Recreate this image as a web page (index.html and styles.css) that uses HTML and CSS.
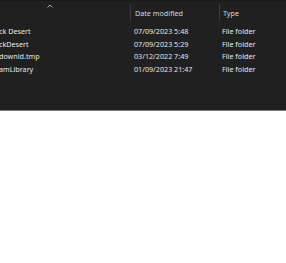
FILE: index.html
```html
<!DOCTYPE html>
<html>
<head>
<meta charset="utf-8">
<link rel="stylesheet" href="styles.css">
</head>
<body>
<div class="panel">
  <div class="header">
    <div class="col name hcell">
      <svg class="caret" width="6" height="4" viewBox="0 0 6 4"><path d="M0.5 3.5 L3 1 L5.5 3.5" fill="none" stroke="#a8a8a8" stroke-width="1"/></svg>
    </div>
    <div class="sep"></div>
    <div class="col date hcell">Date modified</div>
    <div class="sep"></div>
    <div class="col type hcell">Type</div>
  </div>
  <div class="rows">
    <div class="row"><div class="col name"><span class="clip">ck Desert</span></div><div class="col date">07/09/2023 5:48</div><div class="col type">File folder</div></div>
    <div class="row"><div class="col name"><span class="clip">ckDesert</span></div><div class="col date">07/09/2023 5:29</div><div class="col type">File folder</div></div>
    <div class="row"><div class="col name"><span class="clip">downld.tmp</span></div><div class="col date">03/12/2022 7:49</div><div class="col type">File folder</div></div>
    <div class="row"><div class="col name"><span class="clip">amLibrary</span></div><div class="col date">01/09/2023 21:47</div><div class="col type">File folder</div></div>
  </div>
</div>
</body>
</html>
```
FILE: styles.css
```css
html, body {
  margin: 0;
  padding: 0;
  background: #ffffff;
}
body {
  font-family: "Noto Sans", "Open Sans", sans-serif;
  font-size: 7.2px;
  color: #e6e6e6;
}
.panel {
  height: 111px;
  background: #202020;
  border-top: 1px solid #1a1a1a;
  border-bottom: 1px solid #7c7c7c;
  box-sizing: border-box;
  overflow: hidden;
}
.header {
  display: flex;
  height: 23px;
  align-items: center;
  color: #d8d8d8;
}
.hcell {
  height: 100%;
  display: flex;
  align-items: center;
}
.sep {
  width: 1px;
  height: 17px;
  background: #3c3c3c;
  align-self: flex-start;
  margin-top: 3px;
}
.col.name {
  width: 130px;
  overflow: hidden;
  white-space: nowrap;
}
.header .col.name {
  justify-content: flex-start;
  align-items: flex-start;
}
.caret {
  margin-left: 47px;
  margin-top: 3px;
}
.col.date {
  width: 84px;
  padding-left: 4px;
  white-space: nowrap;
}
.col.type {
  padding-left: 3px;
  white-space: nowrap;
}
.header .col.date { width: 84px; }
.rows {
  padding-top: 0.5px;
}
.row {
  display: flex;
  height: 12.7px;
  align-items: center;
}
.row .col.date { width: 85px; }
.clip {
  display: block;
  margin-left: -1px;
}
```
